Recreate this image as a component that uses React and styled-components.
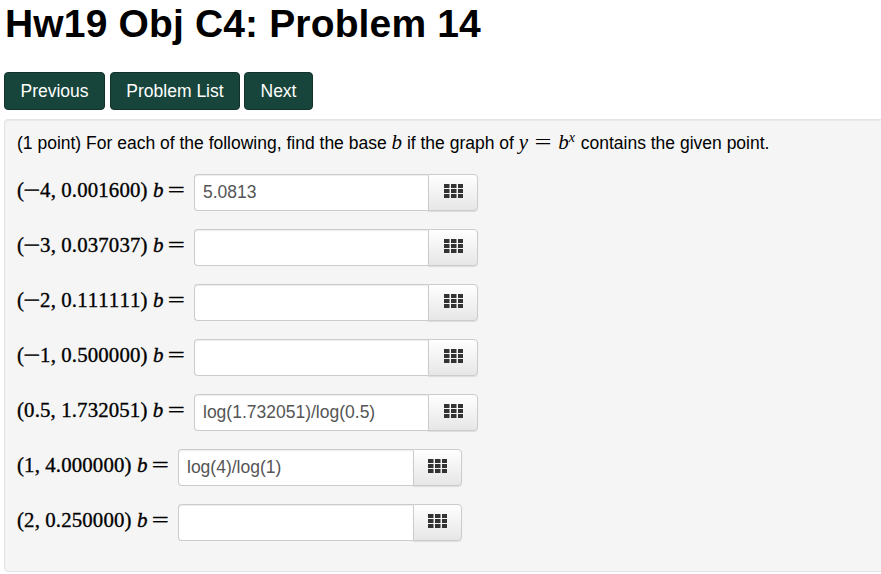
import React from 'react'
import styled, { createGlobalStyle } from 'styled-components'

const GlobalStyle = createGlobalStyle`
  html, body {
    margin: 0;
    padding: 0;
    background: #fff;
    overflow: hidden;
  }
  body {
    font-family: "Liberation Sans", Arial, sans-serif;
    color: #000;
  }
`

const Page = styled.div`
  width: 881px;
  height: 574px;
  padding-left: 4px;
  box-sizing: border-box;
  overflow: hidden;
`

const Title = styled.h1`
  margin: 0;
  padding-left: 1px;
  height: 72px;
  font-size: 39px;
  line-height: 48px;
  font-weight: 700;
  letter-spacing: 0.15px;
`

const NavBar = styled.div`
  display: flex;
  gap: 4px;
  height: 38px;
  margin-bottom: 9px;
`

const NavButton = styled.a`
  display: flex;
  align-items: center;
  justify-content: center;
  box-sizing: border-box;
  width: ${p => p.$width}px;
  margin-right: ${p => p.$gap || 0}px;
  background: #18453b;
  border: 1px solid #123229;
  border-radius: 4px;
  color: #fff;
  font-size: 17.5px;
`

const Well = styled.div`
  box-sizing: border-box;
  width: 900px;
  height: 453px;
  padding: 11px 12px;
  background: #f5f5f5;
  border: 1px solid #e3e3e3;
  border-radius: 4px;
  box-shadow: inset 0 1px 1px rgba(0, 0, 0, 0.05);
`

const Intro = styled.p`
  margin: 0 0 20px;
  font-size: 17.5px;
  line-height: 22px;
`

const Label = styled.span`
  flex: none;
  width: ${p => p.$width}px;
  margin-bottom: 4px;
  font-family: "Liberation Serif", "Times New Roman", serif;
  font-size: 20.8px;
  font-kerning: none;
  letter-spacing: 0.15px;
  white-space: nowrap;
  -webkit-text-stroke: 0.35px #000;
`

// TeX operators are wider than the serif ones, so they get stretched
const Op = styled.span`
  display: inline-block;
  width: ${p => p.$width || 16}px;
  margin: 0 ${p => p.$space || 0}px;
  text-align: center;
  font-family: "Liberation Serif", "Times New Roman", serif;
  font-size: 20.8px;
  line-height: 1;
  transform: scaleX(1.45);
`

const Var = styled.i`
  font-family: "Liberation Serif", "Times New Roman", serif;
  font-size: 21px;
  font-style: italic;
  margin: 0 ${p => p.$space || 0}px;
`

const Sup = styled.sup`
  font-family: "Liberation Serif", "Times New Roman", serif;
  font-size: 14px;
  font-style: italic;
  line-height: 0;
  margin-right: 1px;
`

const Row = styled.div`
  display: flex;
  align-items: center;
  height: 37px;
  margin-bottom: 18px;
`

const Input = styled.div`
  box-sizing: border-box;
  flex: none;
  width: ${p => p.$width}px;
  height: 37px;
  padding-left: 8px;
  display: flex;
  align-items: center;
  background: #fff;
  border: 1px solid #ccc;
  border-right: none;
  border-radius: 4px 0 0 4px;
  box-shadow: inset 0 1px 1px rgba(0, 0, 0, 0.075);
  color: #555;
  font-size: 17.5px;
`

const PaletteButton = styled.div`
  box-sizing: border-box;
  flex: none;
  width: ${p => p.$width}px;
  height: 37px;
  padding-bottom: 4px;
  display: flex;
  align-items: center;
  justify-content: center;
  background: linear-gradient(#fff, #e6e6e6);
  border: 1px solid #ccc;
  border-radius: 0 4px 4px 0;
  box-shadow: 0 1px 1px rgba(0, 0, 0, 0.1);
`

const GridIcon = () => (
  <svg width="19" height="14" viewBox="0 0 19 14" fill="#333">
    {[0, 5, 10].map(y =>
      [0, 7, 14].map(x => <rect key={`${x}-${y}`} x={x} y={y} width="5.5" height="4" />)
    )}
  </svg>
)

const rows = [
  { neg: true, point: '4, 0.001600)', value: '5.0813' },
  { neg: true, point: '3, 0.037037)', value: '' },
  { neg: true, point: '2, 0.111111)', value: '' },
  { neg: true, point: '1, 0.500000)', value: '' },
  { point: '0.5, 1.732051)', value: 'log(1.732051)/log(0.5)' },
  { point: '1, 4.000000)', value: 'log(4)/log(1)', short: true },
  { point: '2, 0.250000)', value: '', short: true },
]

export default function App() {
  return (
    <Page>
      <GlobalStyle />
      <Title>Hw19 Obj C4: Problem 14</Title>
      <NavBar>
        <NavButton $width={101} $gap={1}>Previous</NavButton>
        <NavButton $width={130}>Problem List</NavButton>
        <NavButton $width={69}>Next</NavButton>
      </NavBar>
      <Well>
        <Intro>
          (1 point) For each of the following, find the base <Var>b</Var> if the graph of{' '}
          <Var>y</Var><Op $width={18} $space={6}>=</Op><Var>b</Var><Sup>x</Sup> contains the given point.
        </Intro>
        {rows.map(r => (
          <Row key={r.point}>
            <Label $width={r.short ? 161 : 177}>
              ({r.neg && <Op>−</Op>}{r.point} <Var>b</Var><Op $width={17} $space={4}>=</Op>
            </Label>
            <Input $width={r.short ? 235 : 234}>{r.value}</Input>
            <PaletteButton $width={r.short ? 49 : 50}><GridIcon /></PaletteButton>
          </Row>
        ))}
      </Well>
    </Page>
  )
}
